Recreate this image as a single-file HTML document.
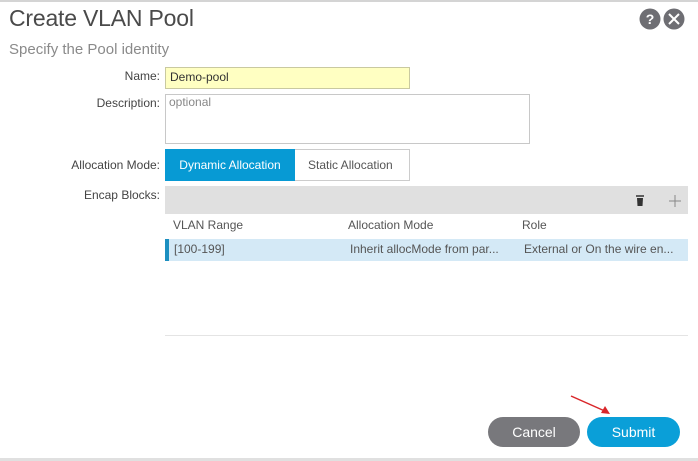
<!DOCTYPE html>
<html><head><style>
body{margin:0;width:698px;height:461px;background:#fff;font-family:"Liberation Sans",sans-serif;position:relative;overflow:hidden;color:#333}
.a{position:absolute}
.lbl{position:absolute;right:538px;font-size:12px;color:#444;text-align:right;white-space:nowrap}
.t{font-size:12px;color:#555;white-space:nowrap}
</style></head><body>
<div class="a" style="left:0;top:0;width:698px;height:2px;background:#d4d4d4"></div>
<div class="a" style="left:9px;top:5px;font-size:23px;color:#4a4a4a;letter-spacing:-0.2px">Create VLAN Pool</div>
<div class="a" style="left:9px;top:41px;font-size:15px;color:#8a8a8a">Specify the Pool identity</div>
<svg class="a" style="left:639px;top:8px" width="50" height="22">
<circle cx="11" cy="11" r="10.5" fill="#6e6e73"/><text x="11" y="16" text-anchor="middle" font-family="Liberation Sans" font-weight="bold" font-size="14" fill="#fff">?</text>
<circle cx="35" cy="11" r="10.5" fill="#6e6e73"/><path d="M30 6L40 16M40 6L30 16" stroke="#fff" stroke-width="2"/>
</svg>
<div class="lbl" style="top:69px">Name:</div>
<div class="a" style="left:165px;top:67px;width:243px;height:20px;background:#ffffc2;border:1px solid #c9c9a0"></div>
<div class="a t" style="left:170px;top:70px;color:#333">Demo-pool</div>
<div class="lbl" style="top:96px">Description:</div>
<div class="a" style="left:165px;top:94px;width:363px;height:48px;border:1px solid #c8c8c8"></div>
<div class="a t" style="left:169px;top:95px;color:#888">optional</div>
<div class="lbl" style="top:158px">Allocation Mode:</div>
<div class="a" style="left:165px;top:149px;width:243px;height:30px;border:1px solid #ccc"></div>
<div class="a" style="left:165px;top:149px;width:130px;height:32px;background:#079ad4;color:#fff;font-size:12px;line-height:32px;text-align:center">Dynamic Allocation</div>
<div class="a t" style="left:308px;top:158px">Static Allocation</div>
<div class="lbl" style="top:188px">Encap Blocks:</div>
<div class="a" style="left:165px;top:186px;width:523px;height:28px;background:#e0e0e0"></div>
<svg class="a" style="left:634px;top:193px" width="50" height="16">
<path d="M2 3H10" stroke="#333" stroke-width="1.5"/><path d="M3 5H9L8.5 13H3.5Z" fill="#333"/>
<path d="M41 2V14M35 8H47" stroke="#888" stroke-width="1"/>
</svg>
<div class="a t" style="left:173px;top:218px">VLAN Range</div>
<div class="a t" style="left:348px;top:218px">Allocation Mode</div>
<div class="a t" style="left:522px;top:218px">Role</div>
<div class="a" style="left:165px;top:239px;width:523px;height:22px;background:#d4e9f6"></div>
<div class="a" style="left:165px;top:239px;width:4px;height:22px;background:#1c8fc0"></div>
<div class="a t" style="left:174px;top:242px">[100-199]</div>
<div class="a t" style="left:350px;top:242px">Inherit allocMode from par...</div>
<div class="a t" style="left:524px;top:242px">External or On the wire en...</div>
<div class="a" style="left:165px;top:335px;width:523px;height:1px;background:#e4e4e4"></div>
<div class="a" style="left:488px;top:417px;width:92px;height:30px;border-radius:15px;background:#78787c;color:#fff;font-size:14px;line-height:30px;text-align:center">Cancel</div>
<div class="a" style="left:587px;top:417px;width:93px;height:30px;border-radius:15px;background:#0a9fd8;color:#fff;font-size:14px;line-height:30px;text-align:center">Submit</div>
<svg class="a" style="left:565px;top:390px" width="50" height="28"><path d="M6 6L42 22" stroke="#d9262a" stroke-width="1.5"/><path d="M45 24L36 23L40 16Z" fill="#d9262a"/></svg>
<div class="a" style="left:0;top:458px;width:698px;height:3px;background:#e0e0e0"></div>
</body></html>
